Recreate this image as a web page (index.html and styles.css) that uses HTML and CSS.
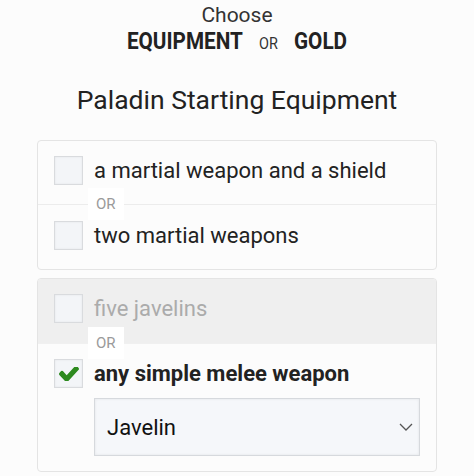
FILE: index.html
```html
<!DOCTYPE html>
<html>
<head>
<meta charset="utf-8">
<link rel="stylesheet" href="styles.css">
</head>
<body>
<div class="page">
  <header class="header">
    <div class="choose">Choose</div>
    <div class="mode"><span class="mode-strong">EQUIPMENT</span><span class="mode-or">OR</span><span class="mode-strong">GOLD</span></div>
  </header>
  <h1 class="title">Paladin Starting Equipment</h1>

  <section class="card">
    <div class="opt">
      <span class="box"></span>
      <span class="label">a martial weapon and a shield</span>
    </div>
    <div class="opt opt-next">
      <span class="or">OR</span>
      <span class="box"></span>
      <span class="label">two martial weapons</span>
    </div>
  </section>

  <section class="card card-second">
    <div class="opt opt-disabled">
      <span class="box"></span>
      <span class="label">five javelins</span>
    </div>
    <div class="opt opt-next opt-chosen">
      <span class="or">OR</span>
      <div class="opt-line">
        <span class="box box-checked">
          <svg viewBox="121 430 1550 1000" width="20" height="14" preserveAspectRatio="none"><path fill="#2d8a1f" d="M1671 566q0 40-28 68l-724 724-136 136q-28 28-68 28t-68-28l-136-136-362-362q-28-28-28-68t28-68l136-136q28-28 68-28t68 28l294 295 656-657q28-28 68-28t68 28l136 136q28 28 28 68z"/></svg>
        </span>
        <span class="label label-bold">any simple melee weapon</span>
      </div>
      <div class="select">
        <span class="select-value">Javelin</span>
        <svg class="chev" viewBox="0 0 14 8" width="14" height="8"><path d="M1 1 L7 7 L13 1" fill="none" stroke="#555" stroke-width="1.3"/></svg>
      </div>
    </div>
  </section>
</div>
</body>
</html>
```
FILE: styles.css
```css
* { box-sizing: border-box; }
html, body { margin: 0; padding: 0; }
body {
  background: #fcfcfc;
  font-family: Roboto, "Liberation Sans", sans-serif;
  color: #222;
}
.page {
  padding: 3px 37px 0;
}
.header {
  text-align: center;
}
.choose {
  font-size: 21px;
  line-height: 25px;
  color: #333;
}
.mode {
  display: flex;
  justify-content: center;
  align-items: baseline;
  gap: 18px;
  height: 27px;
  line-height: 27px;
  transform: scaleX(0.9);
}
.mode-strong {
  font-size: 23px;
  font-weight: 700;
  color: #222;
}
.mode-or {
  font-size: 16px;
  color: #333;
}
.title {
  margin: 30px 0 25px;
  font-size: 26.5px;
  line-height: 30px;
  font-weight: 400;
  text-align: center;
  color: #222;
}
.card {
  border: 1px solid #e4e4e4;
  border-radius: 4px;
  background: #fcfcfc;
  overflow: hidden;
}
.card-second {
  margin-top: 8px;
}
.opt {
  position: relative;
  display: flex;
  align-items: center;
  gap: 11px;
  padding: 15px 16px 19px;
}
.opt-next {
  border-top: 1px solid #ececec;
  padding-top: 16px;
}
.opt-disabled {
  background: #efefef;
  padding-bottom: 20px;
}
.opt-disabled .label {
  color: #ababab;
}
.opt-chosen {
  display: block;
  padding-top: 15px;
  padding-bottom: 15px;
  border-top-color: #f0f0f0;
}
.opt-line {
  display: flex;
  align-items: center;
  gap: 11px;
}
.box {
  flex: none;
  width: 29px;
  height: 29px;
  border: 1px solid #d9dbde;
  background: #f3f5f8;
  box-shadow: inset 0 0 2px rgba(0, 0, 0, 0.08);
  display: flex;
  align-items: center;
  justify-content: center;
}
.box-checked svg {
  display: block;
}
.label {
  font-size: 22px;
  line-height: 29px;
  color: #222;
}
.label-bold {
  font-weight: 700;
}
.or {
  position: absolute;
  left: 50px;
  top: -17px;
  padding: 8px;
  background: #fff;
  font-size: 15px;
  line-height: 16px;
  color: #9a9a9a;
}
.select {
  margin: 10px 0 0 40px;
  height: 58px;
  border: 1px solid #d6d9dd;
  background: #f5f7fa;
  box-shadow: inset 0 0 3px rgba(0, 0, 0, 0.08);
  display: flex;
  align-items: center;
  justify-content: space-between;
  padding: 0 6px 0 12px;
}
.select-value {
  font-size: 22px;
  color: #111;
}
.chev {
  display: block;
}
```
